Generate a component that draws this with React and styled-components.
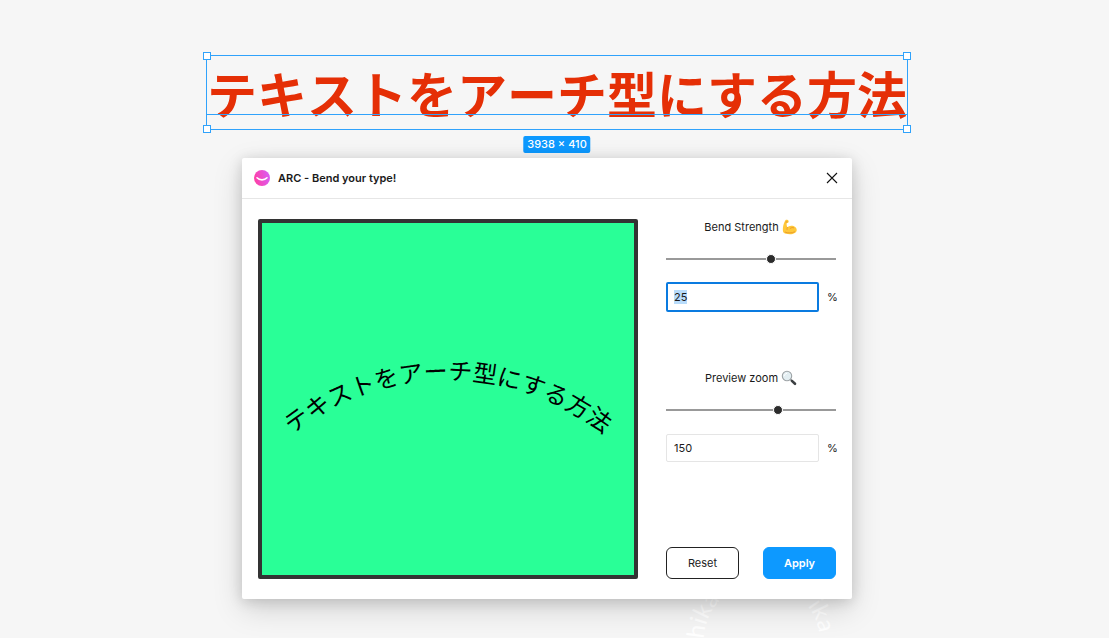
import React, { useState } from "react";
import styled, { createGlobalStyle } from "styled-components";

const BicepsIcon = () => (
    <svg width="16" height="16" viewBox="0 0 16 16" aria-hidden="true">
        <path
            d="M3.400 1.200C4.200.5 6 .7 6.500 1.700c.4.8.1 1.900-.7 2.200-.5.2-.8 0-1.100.2-.3 1.500.1 3 .7 4.300 1-.9 2.200-1.500 3.700-1.600 2.900-.2 5.600 1.600 5.600 4.200 0 2.700-3 4.200-6.700 4.200-3.200 0-5.700-.5-6.500-1.700C.3 11.600.7 5.500 3.400 1.200z"
            fill="#ffc83a"
        />
        <path
            d="M5.400 8.400c-.3.700-.5 1.300-.4 2M8.200 9.400c1-.9 2.300-1.100 3.500-.6M3.300 13.200c2.500 1 6.600 1.100 9.300-.3"
            fill="none"
            stroke="#e8982a"
            strokeWidth="0.9"
            strokeLinecap="round"
        />
        <path
            d="M3.700 2.500h1.900M3.600 3.600l1.400.2"
            stroke="#e8982a"
            strokeWidth="0.6"
        />
    </svg>
);

const MagnifierIcon = () => (
    <svg width="16" height="16" viewBox="0 0 16 16" aria-hidden="true">
        <path d="M9.300 9.300l1.500 1.500" stroke="#8a8f91" strokeWidth="1.600" />
        <path
            d="M10.900 10.900l3.100 2.900"
            stroke="#3c3f41"
            strokeWidth="2.600"
            strokeLinecap="round"
        />
        <circle
            cx="6"
            cy="6"
            r="4.700"
            fill="#e3eef2"
            stroke="#9da3a6"
            strokeWidth="1.100"
        />
        <path
            d="M3.300 5.600c.3-1.200 1.200-2 2.400-2.200"
            fill="none"
            stroke="#fff"
            strokeWidth="1"
            strokeLinecap="round"
        />
    </svg>
);

const ArcLogo = () => (
    <svg width="16" height="16" viewBox="0 0 16 16" aria-hidden="true">
        <defs>
            <linearGradient id="logo" x1="0" y1="0.6" x2="1" y2="0.4">
                <stop offset="0" stopColor="#ff3fa4" />
                <stop offset="1" stopColor="#d95cf5" />
            </linearGradient>
        </defs>
        <circle cx="8" cy="8" r="8" fill="url(#logo)" />
        <path
            d="M3 7.800c2.600 2.700 7.400 2.700 10 0"
            fill="none"
            stroke="#fff"
            strokeWidth="1.600"
            strokeLinecap="round"
        />
    </svg>
);

const Control = ({ id, label, icon, value, min, max, onChange }) => (
    <ControlGroup>
        <Label htmlFor={id}>
            {label} {icon}
        </Label>
        <Slider
            type="range"
            aria-label={label}
            min={min}
            max={max}
            value={value}
            onChange={(e) => onChange(e.target.value)}
        />
        <Field>
            <NumberInput
                id={id}
                type="text"
                value={value}
                autoFocus={id === "bend"}
                onFocus={(e) => e.target.select()}
                onChange={(e) => onChange(e.target.value)}
            />
            <span>%</span>
        </Field>
    </ControlGroup>
);

function App() {
    const [bend, setBend] = useState("25");
    const [zoom, setZoom] = useState("150");

    const handleReset = () => {
        setBend("25");
        setZoom("150");
    };

    return (
        <Canvas>
            <GlobalStyle />

            <RingText width="200" height="120" viewBox="0 0 200 120">
                <path id="ringLeft" d="M44 121A57 57 0 0 1 101 65" fill="none" />
                <path id="ringRight" d="M104 66A57 57 0 0 1 159 115" fill="none" />
                <text>
                    <textPath href="#ringLeft">hika</textPath>
                </text>
                <text textAnchor="end">
                    <textPath href="#ringRight" startOffset="100%">
                        ika
                    </textPath>
                </text>
            </RingText>

            <Selection>
                <Headline>テキストをアーチ型にする方法</Headline>
                <Handle $top $left />
                <Handle $top />
                <Handle $left />
                <Handle />
                <SizeBadge>3938 × 410</SizeBadge>
            </Selection>

            <Dialog>
                <Header>
                    <ArcLogo />
                    <Title>ARC - Bend your type!</Title>
                    <CloseButton type="button" aria-label="Close">
                        <svg width="12" height="12" viewBox="0 0 12 12">
                            <path
                                d="M1 1l10 10M11 1L1 11"
                                stroke="#111"
                                strokeWidth="1.100"
                            />
                        </svg>
                    </CloseButton>
                </Header>
                <Body>
                    <Preview>
                        <svg width="100%" height="100%" viewBox="0 0 372 352">
                            <path
                                id="arc"
                                d="M21 219A250 250 0 0 1 351 219"
                                fill="none"
                            />
                            <text textAnchor="middle">
                                <textPath href="#arc" startOffset="50%">
                                    テキストをアーチ型にする方法
                                </textPath>
                            </text>
                        </svg>
                    </Preview>
                    <Controls>
                        <Control
                            id="bend"
                            label="Bend Strength"
                            icon={<BicepsIcon />}
                            value={bend}
                            min={-100}
                            max={100}
                            onChange={setBend}
                        />
                        <Control
                            id="zoom"
                            label="Preview zoom"
                            icon={<MagnifierIcon />}
                            value={zoom}
                            min={0}
                            max={225}
                            onChange={setZoom}
                        />
                        <Actions>
                            <Button type="button" onClick={handleReset}>
                                Reset
                            </Button>
                            <Button type="button" $primary>
                                Apply
                            </Button>
                        </Actions>
                    </Controls>
                </Body>
            </Dialog>
        </Canvas>
    );
}

const GlobalStyle = createGlobalStyle`
    * {
        box-sizing: border-box;
    }

    body {
        margin: 0;
        background: #f6f6f6;
        color: #1a1a1a;
        font: 11px/16px Inter, "Noto Sans CJK JP", sans-serif;
    }

    button,
    input {
        font: inherit;
        color: inherit;
    }
`;

const Canvas = styled.main`
    position: relative;
    min-height: 100vh;
    overflow: hidden;
`;

const RingText = styled.svg`
    position: absolute;
    left: 660px;
    top: 518px;
    overflow: visible;
    fill: #fff;
    font: 24px Lato, sans-serif;
`;

/* selected text layer */
const Selection = styled.div`
    position: absolute;
    left: 206px;
    top: 55px;
    height: 75px;
    border: 1px solid #30a2fb;
`;

const Headline = styled.h1`
    margin: 0;
    color: #e52f06;
    font: 700 50px/73px "Noto Sans CJK JP", sans-serif;
    font-kerning: none;
    white-space: nowrap;

    &::after {
        content: "";
        position: absolute;
        left: 0;
        right: 0;
        top: 58px;
        border-top: 1px solid #30a2fb;
    }
`;

const Handle = styled.span`
    position: absolute;
    ${({ $top }) => ($top ? "top" : "bottom")}: -4px;
    ${({ $left }) => ($left ? "left" : "right")}: -4px;
    width: 8px;
    height: 8px;
    background: #fff;
    border: 1px solid #30a2fb;
`;

const SizeBadge = styled.span`
    position: absolute;
    left: 50%;
    top: 80px;
    transform: translateX(-50%);
    padding: 0 4px;
    border-radius: 2px;
    background: #0d99ff;
    color: #fff;
    font-weight: 500;
    line-height: 17px;
    white-space: nowrap;
`;

/* plugin window */
const Dialog = styled.section`
    position: absolute;
    left: 242px;
    top: 158px;
    width: 610px;
    background: #fff;
    border-radius: 2px;
    box-shadow: 0 2px 14px rgba(0, 0, 0, 0.15), 0 10px 30px rgba(0, 0, 0, 0.15);
`;

const Header = styled.header`
    display: flex;
    align-items: center;
    gap: 8px;
    height: 41px;
    padding: 0 12px;
    border-bottom: 1px solid #e6e6e6;
`;

const Title = styled.h2`
    flex: 1;
    margin: 0;
    font-size: 11px;
    font-weight: 600;
`;

const CloseButton = styled.button`
    display: flex;
    padding: 2px;
    border: 0;
    background: none;
`;

const Body = styled.div`
    display: flex;
    gap: 28px;
    padding: 20px 16px;
`;

const Preview = styled.div`
    flex: 1;
    height: 360px;
    border: 4px solid #333;
    border-radius: 2px;
    background: #29ff97;

    svg {
        display: block;
    }

    text {
        fill: #000;
        font: 24px "Noto Sans CJK JP", sans-serif;
        font-kerning: none;
    }
`;

const Controls = styled.div`
    display: flex;
    flex-direction: column;
    width: 170px;
`;

const ControlGroup = styled.div`
    display: flex;
    flex-direction: column;
    height: 151px;
`;

const Label = styled.label`
    display: flex;
    align-items: center;
    justify-content: center;
    gap: 3px;
    height: 16px;
`;

const Slider = styled.input`
    appearance: none;
    width: 100%;
    height: 12px;
    margin: 18px 0 17px;
    background: linear-gradient(#999, #999) center / 100% 2px no-repeat;

    &::-webkit-slider-thumb {
        appearance: none;
        width: 10px;
        height: 10px;
        border: 1px solid #fff;
        border-radius: 50%;
        background: #2c2c2c;
    }
`;

const Field = styled.div`
    display: grid;
    grid-template-columns: 1fr 9px;
    align-items: center;
    gap: 8px;
    height: 30px;
`;

const NumberInput = styled.input`
    min-width: 0;
    height: 28px;
    padding: 0 7px;
    border: 1px solid #e5e5e5;
    border-radius: 2px;
    outline: none;

    &:focus {
        height: 30px;
        padding: 0 6px;
        border: 2px solid #0a7be0;
    }

    &::selection {
        background: #b8dcfb;
    }
`;

const Actions = styled.div`
    display: flex;
    justify-content: space-between;
    margin-top: auto;
`;

const Button = styled.button`
    width: 73px;
    height: 32px;
    border: 1px solid ${({ $primary }) => ($primary ? "#0d99ff" : "#222")};
    border-radius: 6px;
    background: ${({ $primary }) => ($primary ? "#0d99ff" : "#fff")};
    color: ${({ $primary }) => ($primary ? "#fff" : "#222")};
    font-weight: ${({ $primary }) => ($primary ? 600 : 400)};
`;

export default App;
